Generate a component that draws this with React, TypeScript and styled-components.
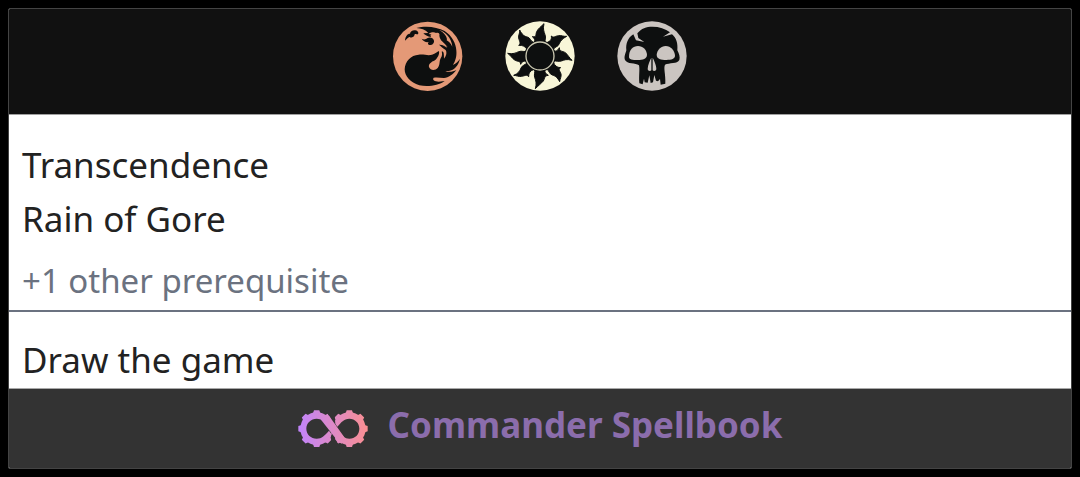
import React from "react";
import styled, { createGlobalStyle } from "styled-components";

const GlobalStyle = createGlobalStyle`
  * { box-sizing: border-box; }
  body {
    margin: 0;
    background: #000;
    color: #222;
    font-family: "Noto Sans", sans-serif;
  }
`;

const Card = styled.article`
  margin: 8px;
  border: 1px solid #444;
  border-radius: 2px;
  background: #fff;
  overflow: hidden;
`;

const ManaBar = styled.header`
  display: flex;
  justify-content: center;
  gap: 42px;
  padding: 12px 12px 23px;
  background: #111;
  border-bottom: 1px solid #a0a0a0;
`;

const ManaSymbol = styled.svg`
  display: block;
  width: 70px;
  height: 70px;
`;

const Section = styled.section`
  padding: 23px 13px 0;
`;

const CardList = styled.ul`
  margin: 0;
  padding: 0;
  list-style: none;
  font-size: 35px;
  line-height: 54px;
`;

const Prerequisites = styled.p`
  margin: 0;
  padding: 9px 0 3px;
  font-size: 33px;
  line-height: 52px;
  color: #6b7280;
`;

const Results = styled(Section)`
  border-top: 2px solid #6b7280;
  padding-top: 21px;
  padding-bottom: 1px;
  border-bottom: 1px solid #a8a8a8;
`;

const Footer = styled.footer`
  display: flex;
  justify-content: center;
  background: #333;
  padding: 10px 12px 17px;
`;

const BrandLink = styled.a`
  display: flex;
  align-items: center;
  gap: 20px;
  color: #8b6dac;
  font-size: 35px;
  font-weight: 700;
  line-height: 52px;
  text-decoration: none;
`;

const Logo = styled.svg`
  display: block;
  width: 70px;
  height: 40px;
  margin-top: 7px;
`;

const INK = "#0d0f0f";

const RedMana = () => (
  <ManaSymbol viewBox="33 32 210 210" role="img" aria-label="Red">
    <circle cx="137" cy="138" r="104" fill="#e49977" />
    <g fill={INK}>
      <path d="M103 53 C130 45 165 49 188 62 C210 76 222 100 223 120 C225 140 219 154 213 164 C222 160 230 152 234 145 C231 160 222 172 212 178 C204 182 197 182 190 182 C200 187 214 184 223 179 C212 194 200 201 186 203 C174 202 164 200 155 202 C150 209 158 213 170 214 L188 212 C170 225 140 230 112 225 C85 216 68 198 68 177 C69 153 87 134 110 133 C127 131 137 137 150 133 C161 130 165 124 171 122 C173 133 166 143 159 150 C147 155 139 162 141 170 C145 181 160 181 167 173 C175 164 171 153 176 144 C181 136 181 129 179 124 C185 122 186 128 186 145 C194 135 195 126 191 119 C183 114 177 108 171 103 C181 102 190 108 195 113 C188 100 175 98 170 91 C166 82 166 74 157 71 C148 69 143 74 147 80 C136 79 129 74 124 69 L139 68 C130 58 117 54 103 53Z" />
      <path d="M69 91 C70 78 76 70 84 70 C85 64 91 59 100 60 C108 61 111 68 108 72 C104 72 101 69 98 72 C98 78 92 82 86 82 C85 77 78 80 69 91Z" />
      <path d="M119 85 C126 89 132 87 137 83 C144 79 154 83 156 91 C157 99 149 106 142 104 C137 103 137 98 140 95 C132 97 124 92 119 85Z" />
    </g>
    <g fill="#e49977">
      <path d="M171 58 C190 64 209 83 211 109 C206 98 200 93 194 90 C198 84 187 66 171 58Z" />
      <path d="M140 71 C150 64 158 66 162 68 C170 65 174 70 172 76 C174 92 186 95 197 111 C186 103 174 102 168 94 C164 84 164 76 155 73Z" />
    </g>
  </ManaSymbol>
);

const WhiteMana = () => (
  <ManaSymbol viewBox="30 33 210 210" role="img" aria-label="White">
    <circle cx="135" cy="138" r="104" fill="#f8f6d8" />
    <g fill={INK} stroke={INK} strokeWidth="3" strokeLinejoin="round">
      <path d="M147 41 C143 57 147 65 150 74 C154 84 148 91 151 98 L118 98 C121 90 119 85 112 80 C126 82 121 75 125 65 C129 56 138 50 147 41Z" />
      <path d="M215 79 C202 86 196 93 193 101 C189 111 181 109 176 117 L157 97 C163 94 171 91 169 78 C175 85 180 78 191 77 C199 76 207 80 215 79Z" />
      <path d="M231 151 C215 146 208 150 199 153 C190 156 183 151 175 154 L176 122 C183 126 188 121 193 113 C193 126 202 122 211 128 C218 133 222 143 231 151Z" />
      <path d="M194 215 C187 202 181 198 172 195 C162 192 164 183 156 178 L176 158 C179 166 185 173 197 173 C188 177 195 183 198 192 C200 199 195 206 194 215Z" />
      <path d="M121 236 C126 220 122 211 119 202 C116 192 122 187 118 178 L150 178 C148 186 152 192 160 196 C148 197 150 204 145 213 C139 220 130 227 121 236Z" />
      <path d="M56 196 C69 191 75 183 78 174 C82 165 90 166 96 158 L115 179 C107 182 100 188 101 200 C95 192 89 198 80 199 C71 201 64 196 56 196Z" />
      <path d="M38 130 C54 133 62 129 71 125 C81 121 88 128 97 122 L96 154 C87 151 80 156 77 163 C76 151 69 156 59 150 C50 144 47 136 38 130Z" />
      <path d="M74 60 C81 74 88 79 97 81 C107 84 105 92 115 97 L96 118 C91 110 84 105 71 106 C79 101 73 94 71 84 C69 75 76 69 74 60Z" />
    </g>
    <circle cx="135" cy="138" r="47" fill={INK} />
    <circle cx="135" cy="138" r="42" fill={INK} stroke="#cbc9b1" strokeWidth="4" />
  </ManaSymbol>
);

const BlackMana = () => (
  <ManaSymbol viewBox="30 33 210 210" role="img" aria-label="Black">
    <circle cx="135" cy="138" r="104" fill="#cbc5c1" />
    <path d="M91 70 C103 55 118 50 136 50 C157 50 175 56 189 67 L168 80 L195 73 C208 84 213 99 211 121 C216 130 220 142 217 150 C211 162 187 158 174 164 C169 174 176 192 175 221 L161 224 L159 207 L153 214 L147 212 L142 195 L138 217 L131 219 L127 196 L122 218 L113 217 L111 206 L107 223 L97 220 C95 196 99 179 96 166 C86 158 60 163 54 150 C50 141 56 130 58 121 C56 101 62 84 79 73 L87 91 L112 96 L94 84Z" fill={INK} />
    <g fill="#cbc5c1">
      <path d="M66 140 C66 119 78 108 93 108 C108 108 119 120 120 134 C120 146 107 150 92 150 C76 150 66 148 66 140Z" />
      <path d="M149 134 C151 119 162 108 176 108 C192 108 202 121 204 136 C205 147 193 150 178 150 C162 150 149 147 149 134Z" />
      <path d="M133 143 C129 151 122 165 122 177 C123 184 130 184 133 181Z M137 143 C141 151 148 165 148 177 C147 184 140 184 137 181Z" />
    </g>
  </ManaSymbol>
);

const TEETH = [0, 45, 90, 135, 180, 225, 270, 315];

const SpellbookLogo = () => (
  <Logo viewBox="28 40 210 120" aria-hidden="true">
    <defs>
      <linearGradient id="brand" gradientUnits="userSpaceOnUse" x1="28" y1="0" x2="238" y2="0">
        <stop offset="0" stopColor="#c084fc" />
        <stop offset="1" stopColor="#fb8f91" />
      </linearGradient>
      <mask id="gears" maskUnits="userSpaceOnUse" x="28" y="40" width="210" height="120">
        <g fill="#fff">
          {[84, 182].map((cx) => (
            <g key={cx}>
              <circle cx={cx} cy="99" r="49" />
              {TEETH.filter((a) => a !== (cx === 84 ? 0 : 180)).map((a) => (
                <path key={a} d={`M${cx + 43} 87 L${cx + 55} 91 V107 L${cx + 43} 111Z`} transform={`rotate(${a} ${cx} 99)`} />
              ))}
            </g>
          ))}
        </g>
        <g fill="#000">
          <path d="M84 69 C67 69 53 82 53 99 C53 116 67 129 84 129 C100 129 108 119 121 105 L145 138 L134 160 L127 131 L129 106 L119 95 C106 79 99 69 84 69Z" />
          <path d="M182 69 C165 69 158 80 146 93 L140 84 L138 62 L110 44 L142 93 L153 108 C162 120 167 129 182 129 C199 129 212 116 212 99 C212 82 199 69 182 69Z" />
        </g>
        <path d="M105 60 L121 60 L167 125 L160 144 L150 140 L97 72Z" fill="#fff" />
      </mask>
    </defs>
    <rect x="28" y="40" width="210" height="120" fill="url(#brand)" mask="url(#gears)" />
  </Logo>
);

export default function App() {
  return (
    <>
      <GlobalStyle />
      <Card>
        <ManaBar>
          <RedMana />
          <WhiteMana />
          <BlackMana />
        </ManaBar>
        <Section>
          <CardList>
            <li>Transcendence</li>
            <li>Rain of Gore</li>
          </CardList>
          <Prerequisites>+1 other prerequisite</Prerequisites>
        </Section>
        <Results>
          <CardList>
            <li>Draw the game</li>
          </CardList>
        </Results>
        <Footer>
          <BrandLink href="#">
            <SpellbookLogo />
            Commander Spellbook
          </BrandLink>
        </Footer>
      </Card>
    </>
  );
}
